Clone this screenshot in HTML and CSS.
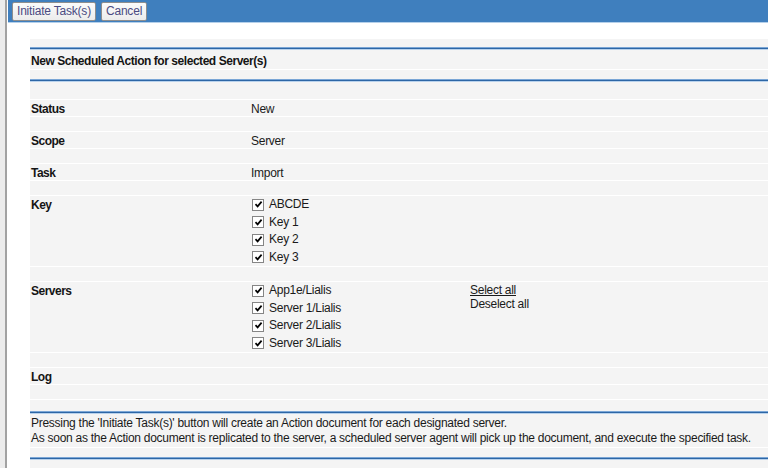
FILE: index.html
```html
<!DOCTYPE html>
<html>
<head>
<meta charset="utf-8">
<link rel="stylesheet" href="styles.css">
</head>
<body>
<div class="frame">
  <div class="gutter"></div>
  <div class="main">
    <div class="toolbar">
      <button class="btn">Initiate Task(s)</button>
      <button class="btn">Cancel</button>
    </div>
    <div class="form">
      <div class="pad pad-top"></div>
      <div class="rule"></div>
      <div class="heading">New Scheduled Action for selected Server(s)</div>
      <div class="pad pad-mid"></div>
      <div class="rule"></div>
      <div class="row spacer first"></div>
      <div class="row field"><div class="label">Status</div><div class="value">New</div></div>
      <div class="row spacer"></div>
      <div class="row field"><div class="label">Scope</div><div class="value">Server</div></div>
      <div class="row spacer"></div>
      <div class="row field"><div class="label">Task</div><div class="value">Import</div></div>
      <div class="row spacer"></div>
      <div class="row list">
        <div class="label">Key</div>
        <div class="value">
          <label class="check"><span class="box"><svg viewBox="0 0 9 9" width="9" height="9"><path d="M1.5 4.2 L3.6 6.4 L7.6 1.6" fill="none" stroke="#000" stroke-width="1.7"/></svg></span>ABCDE</label>
          <label class="check"><span class="box"><svg viewBox="0 0 9 9" width="9" height="9"><path d="M1.5 4.2 L3.6 6.4 L7.6 1.6" fill="none" stroke="#000" stroke-width="1.7"/></svg></span>Key 1</label>
          <label class="check"><span class="box"><svg viewBox="0 0 9 9" width="9" height="9"><path d="M1.5 4.2 L3.6 6.4 L7.6 1.6" fill="none" stroke="#000" stroke-width="1.7"/></svg></span>Key 2</label>
          <label class="check"><span class="box"><svg viewBox="0 0 9 9" width="9" height="9"><path d="M1.5 4.2 L3.6 6.4 L7.6 1.6" fill="none" stroke="#000" stroke-width="1.7"/></svg></span>Key 3</label>
        </div>
      </div>
      <div class="row spacer"></div>
      <div class="row list">
        <div class="label">Servers</div>
        <div class="value">
          <label class="check"><span class="box"><svg viewBox="0 0 9 9" width="9" height="9"><path d="M1.5 4.2 L3.6 6.4 L7.6 1.6" fill="none" stroke="#000" stroke-width="1.7"/></svg></span>App1e/Lialis</label>
          <label class="check"><span class="box"><svg viewBox="0 0 9 9" width="9" height="9"><path d="M1.5 4.2 L3.6 6.4 L7.6 1.6" fill="none" stroke="#000" stroke-width="1.7"/></svg></span>Server 1/Lialis</label>
          <label class="check"><span class="box"><svg viewBox="0 0 9 9" width="9" height="9"><path d="M1.5 4.2 L3.6 6.4 L7.6 1.6" fill="none" stroke="#000" stroke-width="1.7"/></svg></span>Server 2/Lialis</label>
          <label class="check"><span class="box"><svg viewBox="0 0 9 9" width="9" height="9"><path d="M1.5 4.2 L3.6 6.4 L7.6 1.6" fill="none" stroke="#000" stroke-width="1.7"/></svg></span>Server 3/Lialis</label>
        </div>
        <div class="links">
          <a class="link underline">Select all</a>
          <a class="link">Deselect all</a>
        </div>
      </div>
      <div class="row spacer"></div>
      <div class="row field"><div class="label">Log</div><div class="value"></div></div>
      <div class="row spacer"></div>
      <div class="pad pad-note"></div>
      <div class="rule"></div>
      <div class="note">
        <div>Pressing the 'Initiate Task(s)' button will create an Action document for each designated server.</div>
        <div>As soon as the Action document is replicated to the server, a scheduled server agent will pick up the document, and execute the specified task.</div>
      </div>
      <div class="pad pad-mid"></div>
      <div class="rule"></div>
      <div class="pad pad-tail"></div>
    </div>
  </div>
</div>
</body>
</html>
```

FILE: styles.css
```css
html, body {
  margin: 0;
  padding: 0;
  background: #ffffff;
  height: 100%;
  overflow: hidden;
}
body {
  font-family: "Liberation Sans", Arial, sans-serif;
  font-size: 12px;
  letter-spacing: -0.27px;
  color: #1a1a1a;
}
.frame {
  display: flex;
  height: 100%;
}
.gutter {
  width: 5px;
  flex: none;
  background: #ececec;
  border-right: 2px solid #a2a2a2;
  margin-right: 1px;
}
.main {
  flex: 1;
  min-width: 0;
  display: flex;
  flex-direction: column;
}
.toolbar {
  height: 23px;
  background: #3f7fbe;
  border-bottom: 1px solid #b5d0ea;
  display: flex;
  align-items: flex-start;
  gap: 5px;
  padding: 2px 0 0 4px;
  box-sizing: border-box;
  flex: none;
}
.btn {
  font-family: "Liberation Sans", Arial, sans-serif;
  font-size: 12px;
  letter-spacing: -0.2px;
  color: #4b4b82;
  background: linear-gradient(#fbfbfb, #ececec);
  border: 1px solid #8e8e8e;
  border-radius: 2px;
  height: 19px;
  padding: 0 4px;
  line-height: 17px;
  margin: 0;
}
.form {
  flex: 1;
  margin: 16px 0 0 22px;
  background: #f4f4f4;
}
.pad-top { height: 8px; }
.pad-mid { height: 9px; }
.pad-note { height: 11px; }
.pad-tail { height: 20px; }
.rule {
  height: 3px;
  background: linear-gradient(#7aa6d6 0, #7aa6d6 1px, #2d66a5 1px, #2d66a5 2px, #b9d2ec 2px);
}
.heading {
  height: 19px;
  line-height: 23px;
  font-weight: bold;
  letter-spacing: -0.45px;
  padding-left: 1px;
  border-bottom: 1px solid #ffffff;
  color: #151515;
}
.row {
  display: grid;
  grid-template-columns: 220px 220px 1fr;
  border-bottom: 1px solid #ffffff;
}
.spacer { height: 14px; }
.spacer.first { height: 17px; }
.field {
  height: 16px;
  line-height: 18px;
}
.label {
  font-weight: bold;
  letter-spacing: -0.5px;
  padding-left: 1px;
  color: #151515;
}
.value {
  padding-left: 1px;
}
.list {
  line-height: 17.5px;
}
.list .label { padding-top: 1px; }
.check {
  display: flex;
  align-items: center;
  gap: 5px;
  height: 17.5px;
}
.box {
  width: 10px;
  height: 10px;
  border: 1px solid #858585;
  background: #ffffff;
  margin-left: 1px;
  display: flex;
  align-items: center;
  justify-content: center;
}
.box svg { display: block; }
.links {
  display: flex;
  flex-direction: column;
  line-height: 14px;
  padding-top: 1px;
  align-items: flex-start;
}
.link {
  color: #1a1a1a;
  text-decoration: none;
}
.link.underline { text-decoration: underline; }
.note {
  padding: 2px 0 1px 1px;
  line-height: 15px;
  border-bottom: 1px solid #ffffff;
  white-space: nowrap;
}
```
